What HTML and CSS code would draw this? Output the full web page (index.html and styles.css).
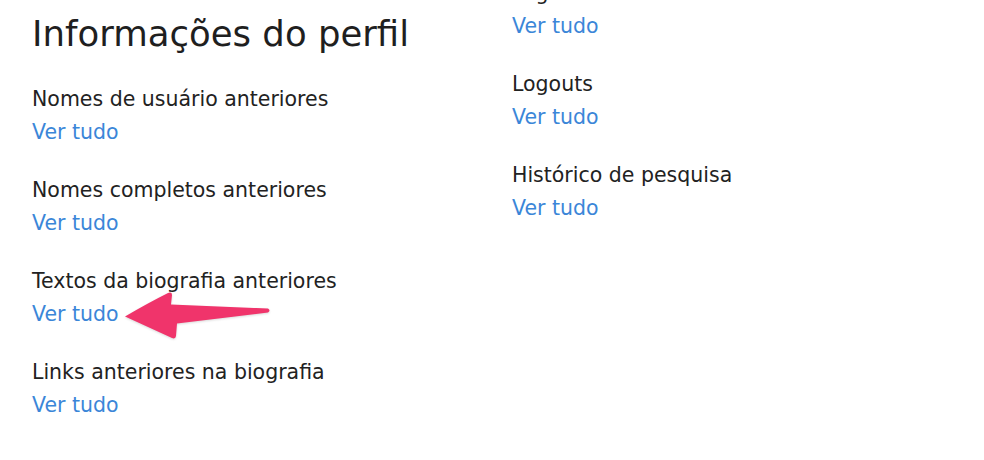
FILE: index.html
```html
<!DOCTYPE html>
<html lang="pt-BR">
<head>
  <meta charset="UTF-8">
  <meta name="viewport" content="width=device-width, initial-scale=1.0">
  <title>Dados da conta</title>
  <link rel="stylesheet" href="styles.css">
</head>
<body>
  <div class="page">
    <div class="column">
      <h1>Informações do perfil</h1>
      <div class="item">
        <div class="label">Nomes de usuário anteriores</div>
        <a class="link" href="#">Ver tudo</a>
      </div>
      <div class="item">
        <div class="label">Nomes completos anteriores</div>
        <a class="link" href="#">Ver tudo</a>
      </div>
      <div class="item">
        <div class="label">Textos da biografia anteriores</div>
        <a class="link" href="#">Ver tudo</a>
        <!-- seta de destaque -->
        <svg class="arrow" width="160" height="62" viewBox="0 0 160 62">
          <path d="M5 32.5 Q28 19 48 9 Q52 7.5 52 11 L51 20.5 L148 24.5 Q151 26.5 148 28.5 L57 39.5 L56 52 Q55.5 55.5 52 54 Q28 43 5 32.5 Z" fill="#f0346b"/>
        </svg>
      </div>
      <div class="item">
        <div class="label">Links anteriores na biografia</div>
        <a class="link" href="#">Ver tudo</a>
      </div>
    </div>
    <div class="column column-right">
      <div class="item">
        <div class="label">Logins</div>
        <a class="link" href="#">Ver tudo</a>
      </div>
      <div class="item">
        <div class="label">Logouts</div>
        <a class="link" href="#">Ver tudo</a>
      </div>
      <div class="item">
        <div class="label">Histórico de pesquisa</div>
        <a class="link" href="#">Ver tudo</a>
      </div>
    </div>
  </div>
</body>
</html>
```

FILE: styles.css
```css
body {
  margin: 0;
  background: #fff;
  font-family: 'DejaVu Sans', Verdana, sans-serif;
  color: #222;
  overflow: hidden;
}
.page {
  display: grid;
  grid-template-columns: 480px 1fr;
  padding-left: 32px;
  height: 460px;
  overflow: hidden;
}
h1 {
  margin: 12px 0 27px;
  font-size: 35.5px;
  font-weight: normal;
  line-height: 44px;
  color: #1f1f1f;
}
.column-right {
  margin-top: -23px;
}
.item {
  position: relative;
  margin-bottom: 25px;
}
.label {
  font-size: 20.5px;
  line-height: 33px;
}
.link {
  display: block;
  font-size: 20.5px;
  line-height: 33px;
  color: #3b86d8;
  text-decoration: none;
}
.arrow {
  position: absolute;
  left: 88px;
  top: 19px;
  filter: drop-shadow(0 1px 1px rgba(0, 0, 0, 0.15));
}
```
